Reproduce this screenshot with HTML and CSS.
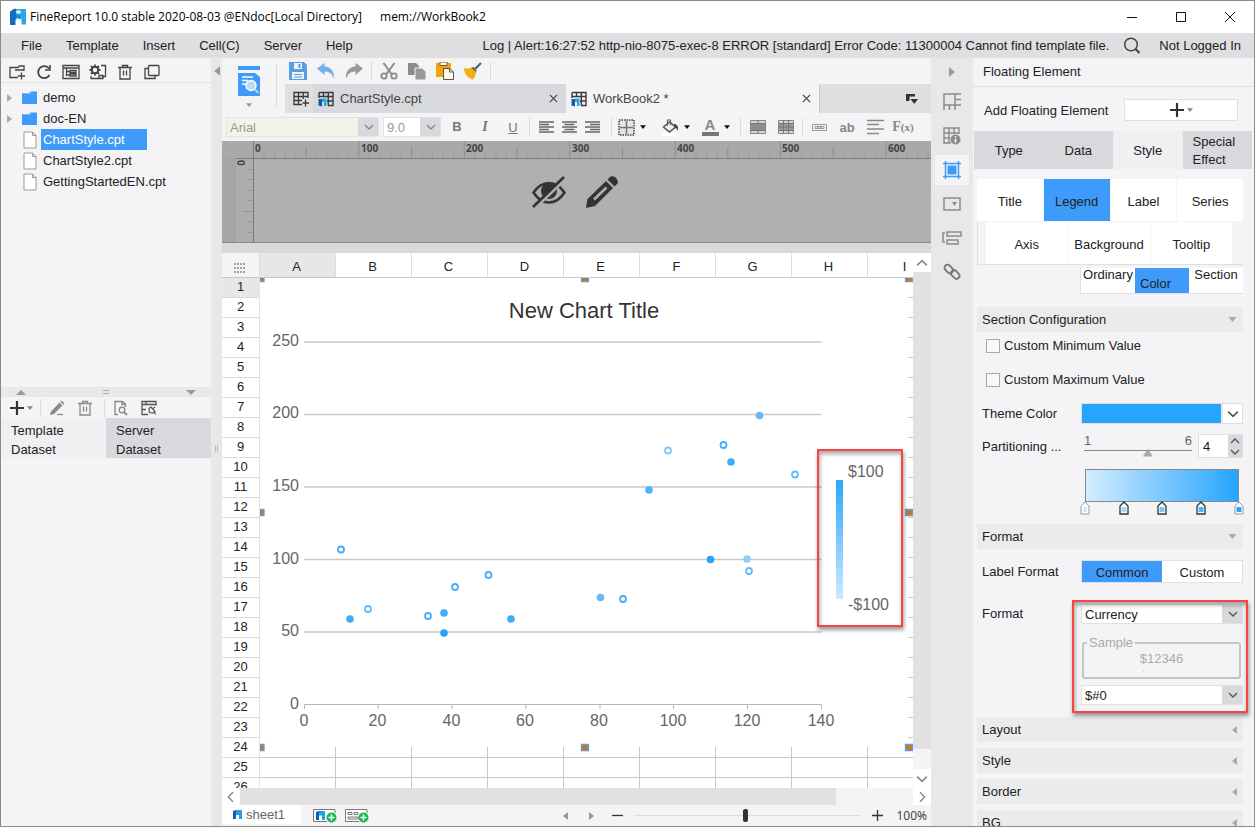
FILE: index.html
```html
<!DOCTYPE html>
<html lang="en">
<head>
<meta charset="utf-8">
<title>FineReport 10.0</title>
<link rel="stylesheet" href="styles.css">
</head>
<body>
<svg class="defs" aria-hidden="true">
  <defs>
    <symbol id="logo" viewBox="0 0 18 18"><path d="M1 3.500 5 .8H7.500V17H1z" fill="#0f6fc4"/><path d="M7 1h10v15.500h-4.500V7.500H7z" fill="#27a9e6"/><path d="M7 6l5.500 1.500v4L7 10z" fill="#1590dc"/><path d="M7.500 2.500h4v3h-4z" fill="#fff"/><path d="M6.500 11.500l4.500 1v5l-4.500-.5z" fill="#fff"/></symbol>
    <symbol id="book" viewBox="0 0 16 16"><path d="M1 1.500h14v13h-5M1 1.500V7M1 5.500h14M9 10h6M5.500 1.500V6M10.300 1.500v13" fill="none" stroke="#3a3a3a" stroke-width="1.400"/><path d="M.5 8H4v7.500l-3.500-1z" fill="#0b5ea8"/><path d="M4 7.500h4.500V15H6v-4H4z" fill="#27a9e6"/></symbol>
    <symbol id="page" viewBox="0 0 14 18"><path d="M1 1h8.500L13 4.500V17H1zM9.500 1v3.500H13" fill="#fff" stroke="#999"/></symbol>
    <symbol id="folder" viewBox="0 0 16 14"><path d="M0 2h7l1.500-1.500H15V13H0z" fill="#3f9bf9"/><path d="M1 2.500h7l1.500-1" stroke="#8cc4fd" fill="none" stroke-width=".8"/></symbol>
    <symbol id="trash" viewBox="0 0 16 16"><path d="M1 3.500h14M5.500 3.500v-2h5v2M3 3.500V15h10V3.500M6.500 6.500v5M9.500 6.500v5" fill="none" stroke="currentColor" stroke-width="1.300"/></symbol>
    <symbol id="down" viewBox="0 0 8 5"><path d="M0 0h8L4 5z" fill="currentColor"/></symbol>
    <symbol id="left" viewBox="0 0 5 8"><path d="M5 0v8L0 4z" fill="currentColor"/></symbol>
    <symbol id="right" viewBox="0 0 5 8"><path d="M0 0v8l5-4z" fill="currentColor"/></symbol>
    <symbol id="chev" viewBox="0 0 10 10"><path d="M1 3l4 4 4-4" fill="none" stroke="currentColor" stroke-width="1.400"/></symbol>
    <symbol id="chevup" viewBox="0 0 10 10"><path d="M1 7l4-4 4 4" fill="none" stroke="currentColor" stroke-width="1.400"/></symbol>
    <symbol id="cross" viewBox="0 0 10 10"><path d="M1 1l8 8M9 1l-8 8" fill="none" stroke="currentColor" stroke-width="1.300"/></symbol>
    <symbol id="plus" viewBox="0 0 16 16"><path d="M8 1v14M1 8h14" fill="none" stroke="currentColor" stroke-width="2.200"/></symbol>
  </defs>
</svg>
<div class="window">
  <header class="titlebar">
    <svg class="logo" width="18" height="18"><use href="#logo"/></svg>
    <span class="title">FineReport 10.0 stable 2020-08-03 @ENdoc[Local Directory]</span>
    <span class="title title-path">mem://WorkBook2</span>
    <div class="winbtns">
      <button aria-label="Minimize"><svg width="12" height="12" viewBox="0 0 12 12"><path d="M1 6.500h10" stroke="#111"/></svg></button>
      <button aria-label="Maximize"><svg width="12" height="12" viewBox="0 0 12 12"><path d="M1.500 1.500h9v9h-9z" fill="none" stroke="#111"/></svg></button>
      <button aria-label="Close"><svg width="12" height="12" viewBox="0 0 12 12"><path d="M1 1l10 10M11 1L1 11" stroke="#111"/></svg></button>
    </div>
  </header>
  <nav class="menubar">
    <button>File</button><button>Template</button><button>Insert</button><button>Cell(C)</button><button>Server</button><button>Help</button>
    <span class="log">Log | Alert:16:27:52 http-nio-8075-exec-8 ERROR [standard] Error Code: 11300004 Cannot find template file.</span>
    <button class="search" aria-label="Search"><svg width="18" height="18" viewBox="0 0 18 18" fill="none" stroke="#444"><circle cx="8" cy="7.500" r="6.300" stroke-width="1.500"/><path d="M12.500 12l4 4" stroke-width="2.200"/></svg></button>
    <a href="#" class="login">Not Logged In</a>
  </nav>
  <main class="main">
    <aside class="left">
      <section class="files">
        <div class="filebar">
          <button aria-label="New folder"><svg width="16" height="16" viewBox="0 0 16 16" fill="none" stroke="#444" stroke-width="1.300"><path d="M9 13.500H1v-10h8L10.500 2H15v5M6 6h9M12.500 8.500v7M9 12h7"/></svg></button>
          <button aria-label="Refresh"><svg width="16" height="16" viewBox="0 0 16 16" fill="none" stroke="#444" stroke-width="1.800"><path d="M13.500 11A6 6 0 1 1 13 4.500"/><path d="M14 1v5H9" stroke-width="1.600"/></svg></button>
          <button aria-label="Template tree"><svg width="18" height="16" viewBox="0 0 18 16" fill="none" stroke="#444" stroke-width="1.300"><path d="M1 1.500h16v13H1zM1 4h16M4.500 4v8M4.500 7.500H8M4.500 11H8M8 6.500h6v2H8zM8 10h6v2H8z"/></svg></button>
          <button aria-label="Settings"><svg width="18" height="16" viewBox="0 0 18 16" fill="none" stroke="#444" stroke-width="1.300"><circle cx="6" cy="6" r="3.200" stroke-width="2"/><path d="M6 .5v2M6 9.500v2M.5 6h2M9.500 6h2M2 2l1.500 1.500M8.500 8.500L10 10M2 10l1.500-1.500M8.500 3.500L10 2" stroke-width="1.800"/><path d="M12 1.500h4.500v11H13M2 12v2.500h8M10 11.500h4v3h-4z"/></svg></button>
          <button aria-label="Delete"><svg width="16" height="16" color="#444"><use href="#trash"/></svg></button>
          <button aria-label="Copy"><svg width="16" height="16" viewBox="0 0 16 16" fill="none" stroke="#444" stroke-width="1.300"><rect x="4.500" y="1.500" width="10.500" height="10" rx="1"/><path d="M4 4.500H1v10h10V12"/></svg></button>
        </div>
        <ul class="tree">
          <li><svg class="tri" width="5" height="8"><use href="#right"/></svg><svg class="fi" width="16" height="14"><use href="#folder"/></svg><span>demo</span></li>
          <li><svg class="tri" width="5" height="8"><use href="#right"/></svg><svg class="fi" width="16" height="14"><use href="#folder"/></svg><span>doc-EN</span></li>
          <li><i class="tri"></i><svg class="fi" width="14" height="18"><use href="#page"/></svg><span class="picked">ChartStyle.cpt</span></li>
          <li><i class="tri"></i><svg class="fi" width="14" height="18"><use href="#page"/></svg><span>ChartStyle2.cpt</span></li>
          <li><i class="tri"></i><svg class="fi" width="14" height="18"><use href="#page"/></svg><span>GettingStartedEN.cpt</span></li>
        </ul>
      </section>
      <section class="datasets">
        <div class="splitbar"><svg width="10" height="5" viewBox="0 0 10 5"><path d="M5 0l5 5H0z" fill="#999"/></svg><i class="grip"></i><svg width="10" height="5" viewBox="0 0 10 5"><path d="M0 0h10L5 5z" fill="#999"/></svg></div>
        <div class="databar">
          <button aria-label="Add dataset" class="wide"><svg width="16" height="16" color="#333"><use href="#plus"/></svg><svg width="6" height="4" color="#888"><use href="#down"/></svg></button>
          <i class="sep"></i>
          <button aria-label="Edit"><svg width="16" height="16" viewBox="0 0 16 16"><path d="M2 11.500L10.500 2.500l3 3L5 14l-4 1z" fill="#8a8a8a"/><path d="M11.300 1.700L12.500.5l3 3-1.200 1.200z" fill="#8a8a8a"/><path d="M8 14.500h6" stroke="#8a8a8a" stroke-width="1.300"/></svg></button>
          <button aria-label="Delete dataset"><svg width="16" height="16" color="#8a8a8a"><use href="#trash"/></svg></button>
          <i class="sep"></i>
          <button aria-label="Preview"><svg width="16" height="16" viewBox="0 0 16 16" fill="none" stroke="#888" stroke-width="1.300"><path d="M5 14.500H2v-13h7.500L12.500 4v3M9 1.500V4.500h3.500"/><circle cx="9" cy="10" r="2.800"/><path d="M11 12l3 3" stroke-width="1.800"/></svg></button>
          <button aria-label="Connection"><svg width="16" height="16" viewBox="0 0 16 16" fill="none" stroke="#555" stroke-width="1.300"><path d="M7 14.500H1v-13h14v4M1 4.500h14M1 9.500h4M5 1.500v3"/><path d="M8 8.500l2-1.500 4 4.500-2 1.500-3.500-.5zM12 8.500l2-1.500M13.500 12.500l1.500 2" stroke-width="1.200"/></svg></button>
        </div>
        <div class="datatabs"><button class="on">Template Dataset</button><button>Server Dataset</button></div>
      </section>
    </aside>
    <div class="gutter"><svg width="6" height="10" color="#999"><use href="#left"/></svg><i></i></div>

    <section class="center">
      <div class="top">
        <div class="preview"><button aria-label="Preview"><svg width="24" height="30" viewBox="0 0 24 30"><path d="M1 0h22v4H1zM1 7h17l5 4v19H1z" fill="#3f9bf9"/><path d="M5 11h11M5 14.500h6M5 18h4" stroke="#fff" stroke-width="1.500"/><circle cx="14" cy="19.500" r="5" fill="#b9dcfb" stroke="#fff" stroke-width="1.400"/><path d="M17.500 23l4 4" stroke="#ccc" stroke-width="2.200"/></svg><svg width="6" height="4" color="#999"><use href="#down"/></svg></button></div>
        <div class="topright">
          <div class="quick">
            <button aria-label="Save"><svg width="18" height="18" viewBox="0 0 18 18"><path d="M0 0h15l3 3v15H0z" fill="#5a9de0"/><path d="M5 1h8v6H5zM3 10h12v7H3z" fill="#eaf3fc"/><path d="M9.500 2h2v4h-2z" fill="#5a9de0"/><path d="M5 12.500h8M5 15h8" stroke="#5a9de0"/></svg></button>
            <button aria-label="Undo"><svg width="18" height="16" viewBox="0 0 18 16"><path d="M0 5.500L7.500 0v3.500C14 4 17.500 8.500 17 15.500 15 11 12.500 8.500 7.500 8.500V12z" fill="#74aff0"/></svg></button>
            <button aria-label="Redo"><svg width="18" height="16" viewBox="0 0 18 16"><path d="M18 5.500L10.500 0v3.500C4 4 .5 8.500 1 15.500 3 11 5.500 8.500 10.500 8.500V12z" fill="#999"/></svg></button>
            <i class="sep"></i>
            <button aria-label="Cut"><svg width="18" height="18" viewBox="0 0 18 18" fill="none" stroke="#8a8a8a"><path d="M3.500 1l8 11M14.500 1l-8 11" stroke-width="2"/><circle cx="4" cy="14" r="2.700" stroke-width="1.800"/><circle cx="14" cy="14" r="2.700" stroke-width="1.800"/></svg></button>
            <button aria-label="Copy"><svg width="18" height="18" viewBox="0 0 18 18"><path d="M0 1h8l3 3v9H0z" fill="#8a8a8a"/><path d="M7 6h7l4 3.500V18H7z" fill="#999" stroke="#f4f4f6"/></svg></button>
            <button aria-label="Paste"><svg width="18" height="18" viewBox="0 0 18 18"><path d="M0 1h15v14H0z" fill="#f2a40f"/><path d="M4 0h7v3.500H4z" fill="#fff" stroke="#7a5a20"/><path d="M7.500 6.500h6l4 3.500v7.500h-10z" fill="#fff8e4" stroke="#555"/><path d="M13.500 6.500V10h4" fill="none" stroke="#555"/></svg></button>
            <button aria-label="Format painter"><svg width="18" height="18" viewBox="0 0 18 18"><path d="M0 6c3 1 6 .5 8-1l4.500 4.500c-1 3-1.500 5.500-3.500 8C4 16 0 12 0 6z" fill="#f3ae14"/><path d="M8.500 5.500l3.500 3.500" stroke="#5d6470" stroke-width="2"/><path d="M11 7L17 1" stroke="#5d6470" stroke-width="2.400"/></svg></button>
            <i class="sep"></i>
          </div>
          <div class="tabs">
            <button class="newtab" aria-label="New workbook"><svg width="16" height="16" viewBox="0 0 16 16" fill="none" stroke="#3a3a3a" stroke-width="1.300"><path d="M9 13.500H1V1.500h14V7M1 5.500h14M1 9.500h8M5.500 1.500v12M10.200 1.500V8M12.500 8.500V15.500M9.500 12H16"/></svg></button>
            <div class="tab"><svg width="16" height="16"><use href="#book"/></svg><span>ChartStyle.cpt</span><button aria-label="Close ChartStyle"><svg width="9" height="9" color="#444"><use href="#cross"/></svg></button></div>
            <div class="tab on"><svg width="16" height="16"><use href="#book"/></svg><span>WorkBook2 *</span><button aria-label="Close WorkBook2"><svg width="9" height="9" color="#444"><use href="#cross"/></svg></button></div>
            <div class="tabrest"><button aria-label="Tab list"><svg width="12" height="10" viewBox="0 0 12 10"><path d="M0 0h9v2.500H3.500V7H0z" fill="#333"/><path d="M4.500 5H12L8.300 10z" fill="#333"/></svg></button></div>
          </div>
        </div>
      </div>

      <div class="format">
        <span class="combo font"><select aria-label="Font"><option>Arial</option></select><svg width="10" height="10"><use href="#chev"/></svg></span>
        <span class="combo size"><select aria-label="Font size"><option>9.0</option></select><svg width="10" height="10"><use href="#chev"/></svg></span>
        <button class="b28 bold">B</button><button class="b28 ital">I</button><button class="b28 under">U</button>
        <i class="sep s1"></i>
        <button class="b23" aria-label="Align left"><svg width="16" height="12" viewBox="0 0 16 12"><path d="M0 1h15M0 3.500h10M0 6h15M0 8.500h10M0 11h15" stroke="#666" stroke-width="1.500"/></svg></button>
        <button class="b23" aria-label="Align center"><svg width="16" height="12" viewBox="0 0 16 12"><path d="M0 1h15M2.500 3.500h10M0 6h15M2.500 8.500h10M0 11h15" stroke="#666" stroke-width="1.500"/></svg></button>
        <button class="b23" aria-label="Align right"><svg width="16" height="12" viewBox="0 0 16 12"><path d="M0 1h15M5 3.500h10M0 6h15M5 8.500h10M0 11h15" stroke="#666" stroke-width="1.500"/></svg></button>
        <i class="sep s2"></i>
        <button class="b20" aria-label="Border"><svg width="17" height="17" viewBox="0 0 17 17"><path d="M1 1h15v15H1z" fill="#e6e6e6" stroke="#444" stroke-width="1.500" stroke-dasharray="1.500 1"/><path d="M8.500 2v13M2 8.500h13" stroke="#777" stroke-width="1.500"/></svg></button>
        <button class="car" aria-label="Border options"><svg width="6" height="4"><use href="#down"/></svg></button>
        <button class="b20 gap" aria-label="Fill"><svg width="17" height="17" viewBox="0 0 17 17"><path d="M0 14h16v3H0z" fill="#fff"/><path d="M1.500 8l6-5 6 5-6 5z" fill="#f4f4f6" stroke="#555" stroke-width="1.600"/><path d="M5.500 7V1h3v5" fill="none" stroke="#666" stroke-width="1.200"/><path d="M12 5c3 0 4.500 2 4 7-1-2-1.500-3-3-3z" fill="#444"/></svg></button>
        <button class="car" aria-label="Fill options"><svg width="6" height="4"><use href="#down"/></svg></button>
        <button class="b20 color" aria-label="Font color"><span>A</span></button>
        <button class="car" aria-label="Font color options"><svg width="6" height="4"><use href="#down"/></svg></button>
        <i class="sep s3"></i>
        <button class="b28" aria-label="Merge"><svg width="16" height="14" viewBox="0 0 16 14"><path d="M.5.5h15v13H.5z" fill="#d5d5d5" stroke="#888"/><path d="M1 3.500h14v7H1z" fill="#8c8c8c"/><path d="M8 0v4M8 10v4M0 3.500h16M0 10.500h16" stroke="#777"/></svg></button>
        <button class="b28" aria-label="Unmerge"><svg width="16" height="14" viewBox="0 0 16 14"><path d="M.5.5h15v13H.5z" fill="#d5d5d5" stroke="#888"/><path d="M1 3.500h14v7H1z" fill="#9a9a9a"/><path d="M5.500 0v14M10.500 0v14M0 3.500h16M0 10.500h16M0 7h16" stroke="#777"/></svg></button>
        <i class="sep s4"></i>
        <button class="b28" aria-label="Cell element"><svg width="15" height="7" viewBox="0 0 15 7" fill="none" stroke="#999"><path d="M.5.5h14v6H.5zM3 2.500h3v2H3zM6 2.500h3v2H6zM9 2.500h3v2H9z"/></svg></button>
        <button class="b28 ab">ab</button>
        <button class="b28" aria-label="Rich text"><svg width="17" height="16" viewBox="0 0 17 16"><path d="M0 1.500h17M0 5.500h12M0 10h17M0 14.500h12" stroke="#888" stroke-width="1.500"/></svg></button>
        <button class="b28 fx">F<small>(x)</small></button>
      </div>

      <div class="paramarea">
        <svg class="ruler" width="100%" height="102" aria-hidden="true">
          <defs>
            <pattern id="hm" x="31" y="0" width="105.400" height="18" patternUnits="userSpaceOnUse"><path d="M.5 0v18M53.200 6v12" stroke="#8e8e8e"/><path d="M11 11v7M21.600 11v7M32.100 11v7M42.700 11v7M63.700 11v7M74.300 11v7M84.800 11v7M95.400 11v7" stroke="#999"/></pattern>
          </defs>
          <rect width="14" height="102" fill="#a5a5a5"/><rect x="14" width="17" height="102" fill="#adadad"/>
          <rect x="0" width="100%" height="17" fill="#a9a9a9"/>
          <rect x="31" width="100%" height="18" fill="url(#hm)"/>
          <path d="M26 28.500h5M26 38.500h5M26 49.500h5M26 59.500h5M20 70.500h11M26 80.500h5M26 91.500h5" stroke="#969696"/>
          <path d="M14 17.500h17M31.500 0v102" stroke="#7c7c7c"/><rect x="31" y="17" width="100%" height="1" fill="#7c7c7c"/>
          <rect y="101" width="100%" height="1" fill="#888"/>
          <g class="nums"><text x="33" y="11">0</text><text x="139" y="11">100</text><text x="244" y="11">200</text><text x="350" y="11">300</text><text x="455" y="11">400</text><text x="560" y="11">500</text><text x="666" y="11">600</text><text transform="translate(19 19) rotate(90)" x="0" y="4">0</text></g>
        </svg>
        <div class="paramicons">
          <button aria-label="Hide parameter pane"><svg width="34" height="32" viewBox="0 0 34 32"><path d="M1.500 16.500Q8 7 17 7t15.500 9.500Q26 26.500 17 26.500T1.500 16.500z" fill="none" stroke="#333" stroke-width="2.600"/><circle cx="17" cy="15" r="8" fill="#333"/><path d="M3 32L34 2.500" stroke="#b0b0b0" stroke-width="3"/><path d="M1 31L32 1" stroke="#333" stroke-width="2.600"/></svg></button>
          <button aria-label="Edit parameter pane"><svg width="32" height="32" viewBox="0 0 32 32"><path d="M0 32l1.500-9L20 5l7 7L9 30z" fill="#333"/><path d="M21.500 3.500l3-3q4-1 6 2t1 5l-3 3z" fill="#333"/><path d="M8 23.500L20.500 11.500" stroke="#b0b0b0" stroke-width="2.600"/></svg></button>
        </div>
      </div>

      <div class="sheetwrap">
        <div class="sheet">
          <table class="cells">
            <thead><tr><th class="corner"><svg width="11" height="10" viewBox="0 0 11 10"><path d="M1 0v10M4 0v10M7 0v10M10 0v10" stroke="#888" stroke-width="1.500" stroke-dasharray="2 2"/></svg></th><th class="act">A</th><th>B</th><th>C</th><th>D</th><th>E</th><th>F</th><th>G</th><th>H</th><th>I</th></tr></thead>
            <tbody>
              <tr><th class="act">1</th><td colspan="9"></td></tr><tr><th>2</th><td colspan="9"></td></tr><tr><th>3</th><td colspan="9"></td></tr><tr><th>4</th><td colspan="9"></td></tr><tr><th>5</th><td colspan="9"></td></tr><tr><th>6</th><td colspan="9"></td></tr><tr><th>7</th><td colspan="9"></td></tr><tr><th>8</th><td colspan="9"></td></tr><tr><th>9</th><td colspan="9"></td></tr><tr><th>10</th><td colspan="9"></td></tr><tr><th>11</th><td colspan="9"></td></tr><tr><th>12</th><td colspan="9"></td></tr><tr><th>13</th><td colspan="9"></td></tr><tr><th>14</th><td colspan="9"></td></tr><tr><th>15</th><td colspan="9"></td></tr><tr><th>16</th><td colspan="9"></td></tr><tr><th>17</th><td colspan="9"></td></tr><tr><th>18</th><td colspan="9"></td></tr><tr><th>19</th><td colspan="9"></td></tr><tr><th>20</th><td colspan="9"></td></tr><tr><th>21</th><td colspan="9"></td></tr><tr><th>22</th><td colspan="9"></td></tr><tr><th>23</th><td colspan="9"></td></tr><tr><th>24</th><td colspan="9"></td></tr><tr><th>25</th><td colspan="9"></td></tr><tr><th>26</th><td colspan="9"></td></tr>
            </tbody>
          </table>
          <svg class="chart" width="653" height="475" viewBox="260 278 653 475" role="img" aria-label="New Chart Title">
            <defs><linearGradient id="lg" x1="0" y1="0" x2="0" y2="1"><stop offset="0" stop-color="#29a7fd"/><stop offset="1" stop-color="#cde9fe"/></linearGradient></defs>
            <rect x="260" y="278" width="648" height="469" fill="#fff"/>
            <text class="ctitle" x="584" y="318">New Chart Title</text>
            <path d="M304 342h517.500M304 414.500h517.500M304 487h517.500M304 559.500h517.500M304 632h517.500" stroke="#cacaca" stroke-width="1.500"/>
            <path d="M304.500 709v-4.500h517v4.500M378 705v4M452 705v4M526 705v4M600 705v4M673.500 705v4M747.500 705v4" stroke="#b5b5b5" fill="none"/>
            <g class="ylab"><text x="299" y="346">250</text><text x="299" y="418">200</text><text x="299" y="491">150</text><text x="299" y="564">100</text><text x="299" y="636">50</text><text x="299" y="709">0</text></g>
            <g class="xlab"><text x="304" y="726">0</text><text x="377.500" y="726">20</text><text x="451.500" y="726">40</text><text x="525" y="726">60</text><text x="599" y="726">80</text><text x="673" y="726">100</text><text x="747" y="726">120</text><text x="821" y="726">140</text></g>
            <g fill="#3fadf7"><circle cx="350" cy="619" r="3.800"/><circle cx="444" cy="613" r="3.800"/><circle cx="444" cy="633" r="3.800" fill="#29a3fa"/><circle cx="511" cy="619" r="3.800"/><circle cx="600.500" cy="597.500" r="3.800" fill="#62bbf8"/><circle cx="649" cy="490" r="3.800" fill="#4db4f8"/><circle cx="731" cy="462" r="3.800"/><circle cx="759.500" cy="415.500" r="3.800" fill="#62bbf8"/><circle cx="710.500" cy="559.500" r="3.800" fill="#29a3fa"/><circle cx="747" cy="559" r="3.800" fill="#8fd0fb"/></g>
            <g fill="#fff" stroke="#41b0f8" stroke-width="1.800"><circle cx="341" cy="549.500" r="3"/><circle cx="368" cy="609" r="3" stroke="#62bbf8"/><circle cx="428" cy="616" r="3"/><circle cx="455" cy="587" r="3"/><circle cx="488.500" cy="575" r="3"/><circle cx="623" cy="599" r="3"/><circle cx="668" cy="450.500" r="3" stroke="#7cc6f9"/><circle cx="723.500" cy="445" r="3"/><circle cx="795" cy="474.500" r="3" stroke="#62bbf8"/><circle cx="749" cy="571" r="3" stroke="#62bbf8"/></g>
            <rect x="836" y="480" width="7" height="119" fill="url(#lg)"/>
            <text class="leg" x="848" y="477">$100</text><text class="leg" x="848" y="610">-$100</text>
            <g fill="#c87810" stroke="#5b9de8" stroke-width="1.300"><path d="M257 275.500h7v6h-7zM581.500 275.500h7v6h-7zM905.500 275.500h7v6h-7zM257 509.500h7v6h-7zM905.500 509.500h7v6h-7zM257 744.500h7v6h-7zM581.500 744.500h7v6h-7zM905.500 744.500h7v6h-7z"/></g>
          </svg>
          <div class="mark mark-legend"></div>
        </div>
        <div class="vscroll"><button aria-label="Scroll up"><svg width="12" height="12" color="#888"><use href="#chevup"/></svg></button><i></i><button aria-label="Scroll down"><svg width="12" height="12" color="#888"><use href="#chev"/></svg></button></div>
      </div>
      <div class="hscroll"><button aria-label="Scroll left"><svg width="10" height="10" viewBox="0 0 10 10"><path d="M7 0L2.500 5 7 10" fill="none" stroke="#888" stroke-width="1.400"/></svg></button><i></i><button aria-label="Scroll right"><svg width="10" height="10" viewBox="0 0 10 10"><path d="M3 0l4.500 5L3 10" fill="none" stroke="#888" stroke-width="1.400"/></svg></button></div>
      <footer class="bottom">
        <button class="sheettab"><svg width="9" height="9" viewBox="0 0 9 9"><path d="M0 1l3-1v9H0z" fill="#0b62b5"/><path d="M3 0h6v9H6V5H3z" fill="#27a0dd"/></svg>sheet1</button>
        <button class="add" aria-label="Add sheet"><svg width="24" height="14" viewBox="0 0 24 14"><path d="M22 4V.5H.5v12H14" fill="#fff" stroke="#777"/><path d="M3 3l3-1v9H3z" fill="#0b62b5"/><path d="M6 2h6v9H9V6.500H6z" fill="#27a0dd"/><circle cx="18.500" cy="8.500" r="5" fill="#18b84e"/><path d="M18.500 5.500v6M15.500 8.500h6" stroke="#fff" stroke-width="1.500"/></svg></button>
        <button class="add" aria-label="Add form sheet"><svg width="24" height="14" viewBox="0 0 24 14"><path d="M22 4V.5H.5v12H14" fill="#fff" stroke="#777"/><path d="M3 3.500h4v2H3zM9 3.500h4v2H9zM3 8h10v2H3z" fill="none" stroke="#777"/><circle cx="18.500" cy="8.500" r="5" fill="#18b84e"/><path d="M18.500 5.500v6M15.500 8.500h6" stroke="#fff" stroke-width="1.500"/></svg></button>
        <div class="zoom">
          <button class="pg" aria-label="Previous sheet"><svg width="5" height="8" color="#999"><use href="#left"/></svg></button>
          <button class="pg" aria-label="Next sheet"><svg width="5" height="8" color="#999"><use href="#right"/></svg></button>
          <button class="pm" aria-label="Zoom out"><svg width="11" height="11" viewBox="0 0 11 11"><path d="M0 5.500h11" stroke="#333" stroke-width="1.300"/></svg></button>
          <input type="range" aria-label="Zoom" min="0" max="100" value="49">
          <button class="pm" aria-label="Zoom in"><svg width="11" height="11" viewBox="0 0 11 11"><path d="M0 5.500h11M5.500 0v11" stroke="#333" stroke-width="1.300"/></svg></button>
          <span>100%</span>
        </div>
      </footer>
    </section>

    <nav class="strip">
      <button class="collapse" aria-label="Collapse"><svg width="6" height="10"><use href="#right"/></svg></button>
      <button aria-label="Cell element"><svg width="18" height="18" viewBox="0 0 18 18" fill="none" stroke="#8a8a8a" stroke-width="1.500"><path d="M1 1h11v11H1zM12 1h6M12 6.500h6M12 12h6M1 12v5M6.500 12v5M12 12v5"/></svg></button>
      <button aria-label="Cell attribute"><svg width="18" height="18" viewBox="0 0 18 18" fill="none" stroke="#8a8a8a" stroke-width="1.400"><path d="M8 16H1V1h15v6M1 6h15M1 11h6M6 1v15M11 1v6"/><circle cx="12.500" cy="12.500" r="5" fill="#8a8a8a" stroke="none"/><path d="M12.500 9v1.300M12.500 11.500v4" stroke="#fff" stroke-width="1.500"/></svg></button>
      <button class="on" aria-label="Floating element"><svg width="18" height="18" viewBox="0 0 18 18" fill="none" stroke="#3f9bf9"><path d="M2.500 0v18M15.500 0v18M0 2.500h18M0 15.500h18" stroke-width="1.500"/><path d="M5 5h8v8H5z" fill="#3f9bf9"/></svg></button>
      <button aria-label="Widget"><svg width="18" height="14" viewBox="0 0 18 14"><path d="M1 1h16v12H1z" fill="none" stroke="#8a8a8a" stroke-width="1.500"/><path d="M9 5h5l-2.500 4z" fill="#8a8a8a"/></svg></button>
      <button aria-label="Condition"><svg width="20" height="14" viewBox="0 0 20 14" fill="none" stroke="#8a8a8a" stroke-width="1.500"><path d="M5 1h14v4H5zM5 9h11v4H5zM3 2H1v9h2"/></svg></button>
      <button aria-label="Hyperlink"><svg width="18" height="18" viewBox="0 0 18 18" fill="none" stroke="#777" stroke-width="1.900"><rect x="1" y="3" width="9.500" height="6" rx="3" transform="rotate(45 5.800 6)"/><rect x="7.500" y="8.500" width="9.500" height="6" rx="3" transform="rotate(45 12.200 11.500)"/></svg></button>
    </nav>

    <aside class="right">
      <h2>Floating Element</h2>
      <div class="addrow"><span>Add Floating Element</span><button aria-label="Add floating element"><svg width="16" height="16" color="#333"><use href="#plus"/></svg><svg width="6" height="4" color="#888"><use href="#down"/></svg></button></div>
      <div class="maintabs"><button>Type</button><button>Data</button><button class="on">Style</button><button>Special Effect</button></div>
      <div class="subs">
        <div class="four"><button>Title</button><button class="on">Legend</button><button>Label</button><button>Series</button></div>
        <div class="three"><button>Axis</button><button>Background</button><button>Tooltip</button></div>
        <div class="modes"><button>Ordinary</button><button class="on">Color</button><button>Section</button></div>
      </div>
      <div class="body">
        <button class="head">Section Configuration<svg width="9" height="5"><use href="#down"/></svg></button>
        <label class="check"><input type="checkbox">Custom Minimum Value</label>
        <label class="check second"><input type="checkbox">Custom Maximum Value</label>
        <div class="row themerow"><span>Theme Color</span><div class="theme"><button class="swatch" aria-label="Theme color"></button><button class="pick" aria-label="Choose color"><svg width="12" height="12"><use href="#chev"/></svg></button></div></div>
        <div class="row part"><label for="parts">Partitioning ...</label><div class="partctl"><div class="scale"><p><span>1</span><span>6</span></p><input type="range" aria-label="Sections" min="1" max="6" value="4"></div><div class="spin"><input id="parts" type="text" value="4"><span><button aria-label="Increase"><svg width="10" height="10"><use href="#chevup"/></svg></button><button aria-label="Decrease"><svg width="10" height="10"><use href="#chev"/></svg></button></span></div></div></div>
        <div class="grad"><div class="gradbar"></div><div class="stops">
          <svg width="10" height="14" viewBox="0 0 10 14"><path d="M1 5l4-4 4 4v8H1z" fill="#fff" stroke="#999"/><path d="M3 6h4v5H3z" fill="#cfe9fd"/></svg>
          <svg width="10" height="14" viewBox="0 0 10 14"><path d="M1 5l4-4 4 4v8H1z" fill="#fff" stroke="#333" stroke-width="1.300"/><path d="M2.500 6h5v5h-5z" fill="#a3d9fd"/></svg>
          <svg width="10" height="14" viewBox="0 0 10 14"><path d="M1 5l4-4 4 4v8H1z" fill="#fff" stroke="#333" stroke-width="1.300"/><path d="M2.500 6h5v5h-5z" fill="#78c8fe"/></svg>
          <svg width="10" height="14" viewBox="0 0 10 14"><path d="M1 5l4-4 4 4v8H1z" fill="#fff" stroke="#333" stroke-width="1.300"/><path d="M2.500 6h5v5h-5z" fill="#4db7fe"/></svg>
          <svg width="10" height="14" viewBox="0 0 10 14"><path d="M1 5l4-4 4 4v8H1z" fill="#fff" stroke="#999"/><path d="M2.500 6h5v5h-5z" fill="#25a5ff"/></svg>
        </div></div>
        <button class="head">Format<svg width="9" height="5"><use href="#down"/></svg></button>
        <div class="row lf"><span>Label Format</span><div class="seg"><button class="on">Common</button><button>Custom</button></div></div>
        <div class="row fmt"><label for="fmt">Format</label>
          <div class="fmtctl">
            <span class="combo"><select id="fmt"><option>Currency</option></select><svg width="10" height="10"><use href="#chev"/></svg></span>
            <fieldset><legend>Sample</legend><span>$12346</span><small>.</small></fieldset>
            <span class="combo"><select aria-label="Pattern"><option>$#0</option></select><svg width="10" height="10"><use href="#chev"/></svg></span>
            <div class="mark mark-format"></div>
          </div>
        </div>
        <div class="folds">
          <button class="head">Layout<svg width="5" height="8"><use href="#left"/></svg></button>
          <button class="head">Style<svg width="5" height="8"><use href="#left"/></svg></button>
          <button class="head">Border<svg width="5" height="8"><use href="#left"/></svg></button>
          <button class="head">BG<svg width="5" height="8"><use href="#left"/></svg></button>
        </div>
      </div>
    </aside>
  </main>
</div>
</body>
</html>
```
FILE: styles.css
```css
* { box-sizing: border-box; }
body { margin: 0; font: 13px/19px "Liberation Sans", Arial, sans-serif; color: #222; }
button, select, input { font: inherit; color: inherit; border: 0; margin: 0; padding: 0; background: none; border-radius: 0; }
button { display: flex; align-items: center; justify-content: center; cursor: pointer; white-space: nowrap; }
svg { display: block; flex: none; overflow: hidden; }
.defs { position: absolute; width: 0; height: 0; }
i { display: block; font-style: normal; }

.window { height: 100vh; display: flex; flex-direction: column; border: 1px solid #8a8a8a; overflow: hidden; background: #f4f4f6; }
.titlebar { display: flex; align-items: center; height: 32px; background: #fff; padding-left: 8px; }
.title { font: 12px/18px "Open Sans", "Noto Sans", sans-serif; color: #000; margin-left: 3px; white-space: nowrap; }
.title-path { margin-left: 18px; }
.winbtns { display: flex; margin-left: auto; }
.winbtns button { width: 49px; height: 32px; }

.menubar { display: flex; align-items: center; gap: 24px; height: 25px; flex: none; background: #dfdfe1; padding: 0 13px 0 20px; }
.menubar button { line-height: 18px; }
.log { margin-left: auto; white-space: nowrap; }
.search { margin: 0 -6px 0 -10px; }
.login { color: inherit; text-decoration: none; white-space: nowrap; }

.main { flex: 1; min-height: 0; display: flex; }
.left { width: 210px; flex: none; display: flex; flex-direction: column; }
.files { flex: 3 3 0; min-height: 0; overflow: hidden; }
.filebar { display: flex; height: 25px; padding: 3px 0 0 2px; border-bottom: 1px solid #e2e2e4; }
.filebar button { width: 27px; height: 22px; }
.tree { list-style: none; margin: 0; padding: 4px 0 0 6px; }
.tree li { display: flex; align-items: center; height: 21px; }
.tri { width: 5px; color: #aaa; margin-right: 10px; flex: none; }
.fi { width: 16px; margin-right: 3px; }
.tree span { line-height: 21px; padding: 0 2px; }
.tree .picked { background: #3f9bf9; color: #fff; width: 106px; }
.datasets { flex: 4 4 0; min-height: 0; }
.splitbar { height: 10px; background: #e8e8e8; display: flex; align-items: center; justify-content: space-between; padding: 0 15px; }
.grip { width: 6px; height: 4px; border: solid #aaa; border-width: 1px 0; }
.databar { display: flex; align-items: center; height: 21px; padding-left: 6px; }
.databar button { width: 28px; height: 21px; }
.databar .wide { gap: 2px; }
.sep { width: 1px; height: 18px; background: #dcdcde; flex: none; margin: 0 5px; }
.databar .sep { margin: 0 2px 0 5px; }
.datatabs { display: flex; }
.datatabs button { flex: 1; padding: 4px 40px 0 10px; height: 40px; text-align: left; white-space: normal; justify-content: flex-start; background: #d8d9dd; }
.datatabs button.on { background: #f0f0f2; }
.gutter { width: 11px; flex: none; background: #e8e8e8; display: flex; flex-direction: column; align-items: center; padding-top: 8px; }
.gutter i { width: 3px; height: 7px; border: solid #bbb; border-width: 0 1px; margin-top: 369px; }

.center { flex: 1; min-width: 0; display: flex; flex-direction: column; }
.top { display: flex; height: 55px; flex: none; }
.preview { width: 63px; flex: none; display: flex; padding: 6px 8px 5px 0; }
.preview button { flex: 1; flex-direction: column; gap: 7px; border-right: 1px solid #dcdcde; }
.topright { flex: 1; min-width: 0; }
.quick { display: flex; align-items: center; height: 26px; gap: 2px; }
.quick button { width: 26px; height: 26px; }
.quick .sep { margin: 0 2px; }
.tabs { display: flex; height: 29px; background: #dfdfe1; }
.newtab { width: 28px; padding-left: 4px; }
.tab { flex: 0 1 253px; display: flex; align-items: center; gap: 6px; padding: 0 8px 0 5px; background: #d8d9dd; color: #444; }
.tab.on { background: #f4f4f6; }
.tab button { margin-left: auto; }
.tabrest { flex: 1; display: flex; justify-content: flex-end; padding-right: 13px; border-left: 1px solid #c8c8cc; }

.format { display: flex; align-items: center; height: 28px; flex: none; padding-left: 4px; color: #777; }
.combo { position: relative; display: block; height: 20px; }
.combo select { appearance: none; display: block; width: 100%; height: 100%; padding: 0 24px 0 3px; border: 1px solid #e2e2e4; background: linear-gradient(#d8d9dd, #d8d9dd) right / 20px 100% no-repeat #fff; }
.combo svg { position: absolute; right: 5px; top: 5px; pointer-events: none; color: #555; }
.format .combo { color: #999; }
.format .combo svg { color: #888; }
.font { width: 153px; margin-right: 4px; }
.font select { background-color: #f3f3ea; }
.size { width: 58px; }
.b28 { width: 28px; height: 24px; }
.b23 { width: 23px; height: 24px; }
.b20 { width: 20px; height: 24px; }
.car { width: 14px; height: 24px; color: #111; }
.bold { font: bold 13px/16px "Liberation Sans", sans-serif; margin-left: 2px; }
.ital { font: italic bold 14px/16px "Liberation Serif", serif; }
.under { text-decoration: underline; }
.s1 { margin: 0 5px 0 2px; }
.s2 { margin: 0 4px 0 7px; }
.s3 { margin: 0 3px 0 6px; }
.s4 { margin: 0 2px; }
.gap { margin-left: 10px; }
.color { margin-left: 6px; }
.color span { font: bold 15px/14px "Liberation Sans", sans-serif; width: 17px; border-bottom: 4px solid #777; color: #888; }
.ab { font-weight: bold; color: #888; }
.fx { font: bold 14px/16px "Liberation Serif", serif; color: #888; }
.fx small { font-size: 11px; }

.paramarea { position: relative; height: 102px; flex: none; background: #b0b0b0; display: flex; align-items: center; justify-content: center; }
.ruler { position: absolute; left: 0; top: 0; }
.nums { font: bold 10px "Noto Sans", sans-serif; fill: #444; }
.paramicons { position: relative; display: flex; gap: 20px; margin-right: 4px; }

.sheetwrap { flex: 1; min-height: 0; display: flex; border-top: 10px solid #d9d9dc; }
.sheet { flex: 1; min-width: 0; position: relative; overflow: hidden; background: #fff; }
.cells { table-layout: fixed; width: 722px; border-collapse: separate; border-spacing: 0; background: repeating-linear-gradient(90deg, transparent 0 75px, #c8c8c8 75px 76px) 38px 0 / 684px 100% no-repeat; }
.cells th { font-weight: normal; padding: 0; text-align: center; background: #fff; }
.cells thead th { width: 76px; height: 25px; padding: 3px 2px 0 0; border: solid #dcdcde; border-width: 0 1px 0 0; border-bottom: 1px solid #c8c8c8; }
.cells thead .corner { width: 38px; background: #f4f4f6; }
.corner svg { margin: 2px auto 0; }
.cells tbody th { height: 20px; line-height: 18px; padding-bottom: 1px; border-bottom: 1px solid #dadadc; border-right: 1px solid #e4e4e4; }
.cells th.act { background: #e7e7e7; }
.cells td { padding: 0; border-bottom: 1px solid #c8c8c8; }
.chart { position: absolute; left: 38px; top: 25px; font-family: "Liberation Sans", Arial, sans-serif; font-size: 16px; fill: #666; }
.ctitle { font-size: 22px; fill: #333; text-anchor: middle; }
.ylab { text-anchor: end; }
.xlab { text-anchor: middle; }
.mark { position: absolute; border: 2px solid #f94444; box-shadow: 1px 3px 4px rgba(0,0,0,.4), inset 1px 3px 4px rgba(0,0,0,.35); pointer-events: none; }
.mark-legend { left: 595px; top: 196px; width: 86px; height: 178px; }
.vscroll { width: 18px; flex: none; display: flex; flex-direction: column; background: #f4f4f6; }
.vscroll button { height: 19px; background: #fff; }
.vscroll i { flex: 1; background: #e1e1e1; margin-bottom: 20px; }
.hscroll { display: flex; height: 17px; flex: none; background: #f4f4f6; }
.hscroll button { width: 18px; background: #fff; }
.hscroll i { flex: 1; background: #e1e1e1; margin-right: 77px; }
.bottom { display: flex; align-items: center; height: 21px; flex: none; }
.sheettab { gap: 4px; width: 79px; height: 19px; align-self: flex-start; background: #fff; color: #666; justify-content: flex-start; padding-left: 11px; }
.add { margin-left: 8px; }
.sheettab + .add { margin-left: 12px; }
.zoom { display: flex; align-items: center; margin-left: auto; padding-right: 4px; font: 12px/20px "Noto Sans", sans-serif; color: #444; }
.zoom .pg { width: 26px; height: 20px; }
.zoom .pm { width: 26px; height: 20px; }
.zoom input { appearance: none; width: 234px; height: 20px; background: linear-gradient(#dcdcde, #dcdcde) center / 226px 1px no-repeat; }
.zoom input::-webkit-slider-thumb { appearance: none; width: 5px; height: 13px; border-radius: 2px; background: #333; }
.zoom span { margin-left: 6px; }

.strip { width: 42px; flex: none; background: #e8e8e8; display: flex; flex-direction: column; align-items: center; }
.strip button { width: 34px; height: 34px; }
.strip .on { background: #f4f4f6; height: 30px; margin: 2px 0; }
.strip .collapse { height: 27px; color: #999; }

.right { width: 281px; flex: none; overflow: hidden; background: #f4f4f7; }
.right h2 { margin: 0; font: inherit; line-height: 28px; height: 29px; padding-left: 10px; border-bottom: 1px solid #e0e0e2; }
.addrow { display: flex; justify-content: space-between; align-items: center; padding: 12px 16px 10px 11px; }
.addrow button { width: 114px; height: 22px; gap: 2px; background: #fff; border: 1px solid #e0e0e2; }
.maintabs { display: grid; grid-template-columns: repeat(4, 1fr); height: 38px; margin: 0 2px 0 1px; }
.maintabs button { background: #d8d9dd; white-space: normal; padding: 2px 10px 0; text-align: left; line-height: 18px; }
.maintabs .on { background: #f0f0f2; }
.subs { margin: 10px 11px 0 4px; }
.subs button { background: #fff; }
.subs .on { background: #3f9bf9; }
.four { display: grid; grid-template-columns: repeat(4, 1fr); gap: 1px; height: 42px; }
.four button, .three button { padding-top: 2px; }
.three { display: grid; grid-template-columns: repeat(3, 1fr); gap: 1px; height: 43px; margin-top: 1px; padding: 0 11px 0 8px; border: solid #e0e0e2; border-width: 0 0 1px 1px; }
.modes { display: grid; grid-template-columns: repeat(3, 1fr); height: 26px; margin: 3px 0 0 103px; border: solid #e0e0e2; border-width: 0 0 1px 1px; }
.modes button { align-items: flex-start; line-height: 13px; }
.modes .on { align-items: flex-end; line-height: 19px; justify-content: flex-start; padding-left: 5px; }
.body { margin: 13px 11px 0 4px; }
.head { width: 100%; height: 25px; justify-content: space-between; padding: 0 6px 0 5px; background: #ebebeb; }
.head svg { color: #aaa; }
.check { display: flex; align-items: center; height: 27px; padding-left: 9px; gap: 4px; }
.check.second { margin-top: 7px; }
.check input { appearance: none; width: 14px; height: 14px; border: 1px solid #aaa; background: #f8f8fa; }
.row { display: grid; grid-template-columns: 99px 1fr; padding-left: 5px; align-items: center; }
.row > span, .row > label { white-space: nowrap; }
.themerow { margin-top: 10px; }
.theme { display: flex; height: 21px; border: 1px solid #e0e0e2; }
.swatch { flex: 1; background: #25a5ff; }
.pick { width: 21px; background: #fff; border-left: 2px solid #e8e8ea; color: #555; }
.part { margin-top: 10px; height: 24px; }
.partctl { display: flex; justify-content: space-between; }
.scale { width: 108px; margin-left: 3px; }
.scale p { display: flex; justify-content: space-between; margin: 0; line-height: 13px; color: #666; }
.scale input { appearance: none; display: block; width: 108px; height: 11px; background: linear-gradient(#888, #888) center 3px / 100% 1px no-repeat; }
.scale input::-webkit-slider-thumb { appearance: none; width: 10px; height: 8px; background: #aaa; clip-path: polygon(50% 0, 100% 100%, 0 100%); }
.spin { display: flex; width: 45px; height: 24px; border: 1px solid #e0e0e2; background: #fff; }
.spin input { flex: 1; min-width: 0; padding-left: 4px; color: #111; }
.spin span { width: 14px; background: #d8d9dd; color: #555; }
.spin button { width: 14px; height: 11px; }
.grad { margin: 11px 4px 9px 108px; }
.gradbar { height: 33px; border: 1px solid #888; background: linear-gradient(90deg, #d4ecfe, #25a5ff); }
.stops { display: flex; justify-content: space-between; margin: -1px -5px 0; }
.lf { margin-top: 11px; }
.seg { display: grid; grid-template-columns: 1fr 1fr; height: 23px; border: 1px solid #e0e0e2; background: #fff; }
.seg button { padding-top: 2px; }
.seg .on { background: #3f9bf9; }
.fmt { margin: 21px 0 11px; align-items: start; }
.fmtctl { position: relative; padding-bottom: 1px; }
.fmt fieldset { margin: 10px 2px 6px 1px; padding: 0; border: 2px solid #c4c4c6; border-radius: 3px; height: 45px; color: #aaa; display: flex; flex-direction: column; align-items: center; }
.fmt legend { padding: 0 2px; margin-left: 3px; line-height: 18px; }
.fmt fieldset span { line-height: 13px; }
.fmt fieldset small { font-size: 8px; line-height: 10px; margin-right: 36px; }
.mark-format { left: -9px; right: -5px; top: -4px; bottom: -7px; }
.folds { display: flex; flex-direction: column; gap: 6px; }
.folds .head { flex: none; }
```
